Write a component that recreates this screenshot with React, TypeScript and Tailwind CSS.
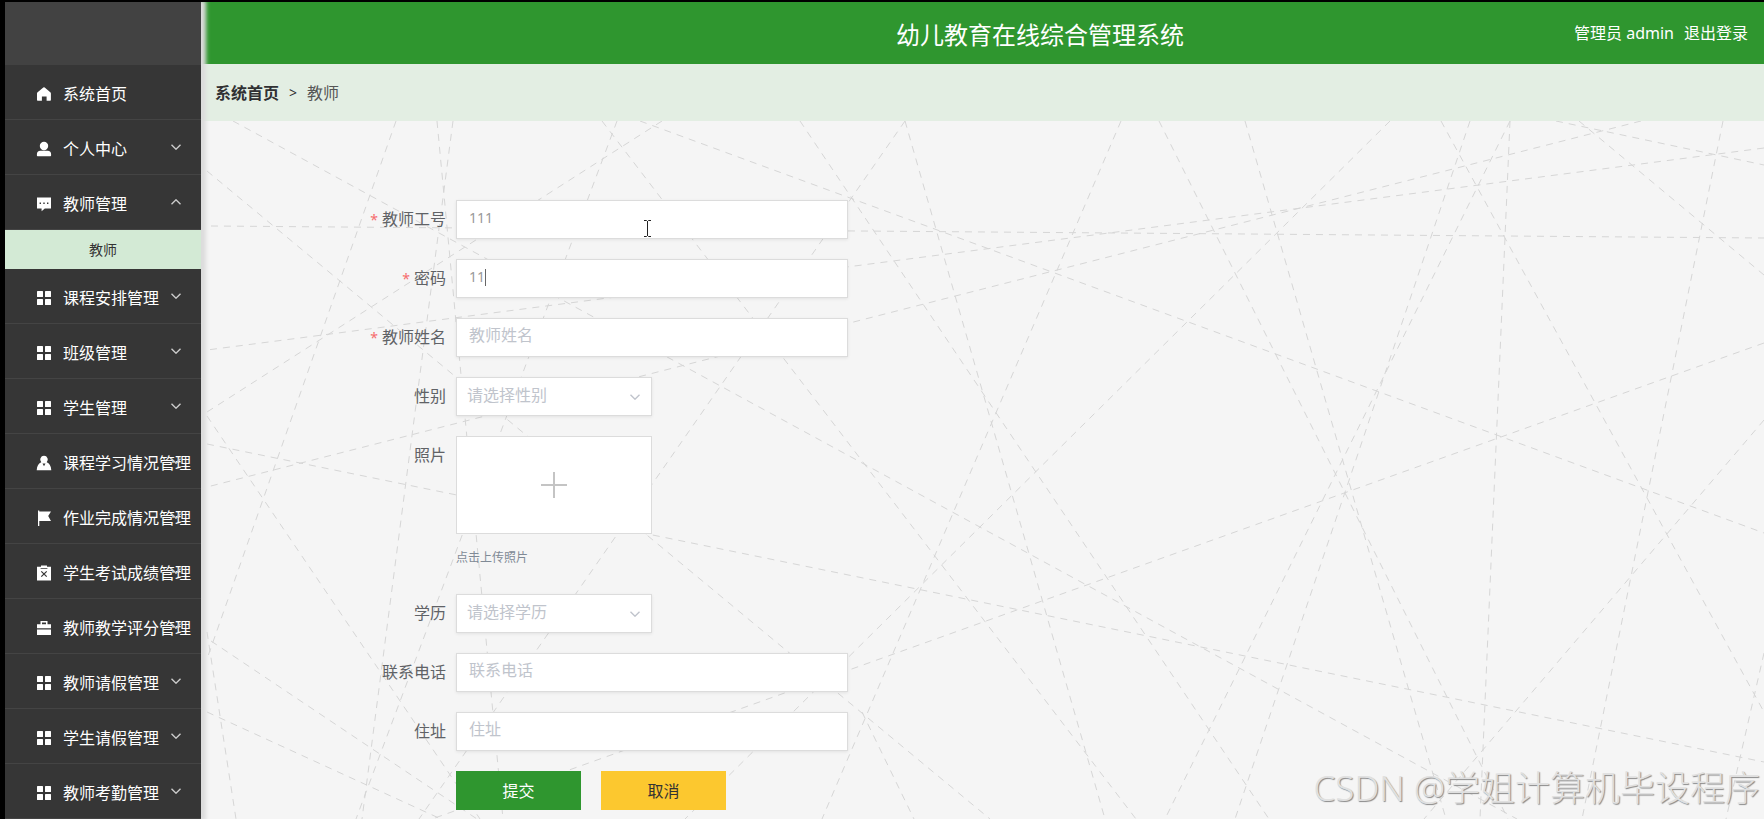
import React, { useState } from 'react';

type IconName = 'home' | 'user' | 'comment' | 'grid' | 'custom' | 'flag' | 'release' | 'case';

interface MenuItem {
  id: number;
  icon: IconName;
  label: string;
  children?: string[];
}

const menuItems: MenuItem[] = [
  { id: 1, icon: 'home', label: '系统首页' },
  { id: 2, icon: 'user', label: '个人中心', children: ['修改密码', '个人信息'] },
  { id: 3, icon: 'comment', label: '教师管理', children: ['教师'] },
  { id: 4, icon: 'grid', label: '课程安排管理', children: ['课程安排'] },
  { id: 5, icon: 'grid', label: '班级管理', children: ['班级'] },
  { id: 6, icon: 'grid', label: '学生管理', children: ['学生'] },
  { id: 7, icon: 'custom', label: '课程学习情况管理', children: ['课程学习情况'] },
  { id: 8, icon: 'flag', label: '作业完成情况管理', children: ['作业完成情况'] },
  { id: 9, icon: 'release', label: '学生考试成绩管理', children: ['学生考试成绩'] },
  { id: 10, icon: 'case', label: '教师教学评分管理', children: ['教师教学评分'] },
  { id: 11, icon: 'grid', label: '教师请假管理', children: ['教师请假'] },
  { id: 12, icon: 'grid', label: '学生请假管理', children: ['学生请假'] },
  { id: 13, icon: 'grid', label: '教师考勤管理', children: ['教师考勤'] }
];

// x1, y1, x2, y2 of every dashed line behind the form
const backdropLines = [
  [905, 121, 1105, 819],
  [1121, 121, 822, 819],
  [1159, 121, 1508, 819],
  [1245, 121, 1446, 819],
  [1390, 121, 685, 819],
  [1441, 121, 1764, 712],
  [1470, 121, 1235, 819],
  [1510, 121, 1165, 819],
  [1510, 121, 1480, 819],
  [1723, 121, 1582, 819],
  [1579, 121, 1764, 275],
  [1556, 121, 1764, 165],
  [1641, 121, 207, 487],
  [1764, 148, 207, 350],
  [211, 226, 1764, 238],
  [640, 121, 1764, 533],
  [800, 121, 1269, 819],
  [602, 121, 1136, 819],
  [233, 121, 1517, 819],
  [207, 171, 990, 819],
  [207, 444, 1764, 762],
  [1764, 343, 432, 819],
  [1764, 420, 1424, 819],
  [1764, 653, 1726, 819],
  [862, 712, 914, 819],
  [396, 121, 207, 659],
  [437, 121, 503, 819],
  [453, 121, 362, 819],
  [617, 121, 356, 819],
  [662, 121, 207, 412],
  [905, 121, 419, 819],
  [207, 416, 480, 819],
  [211, 641, 477, 819],
  [207, 712, 441, 819],
  [207, 632, 236, 819]
];

const MenuIcon: React.FC<{ name: IconName }> = ({ name }) => (
  <svg viewBox="0 0 16 16" className="h-4 w-4 shrink-0 fill-white" aria-hidden="true">
    {name === 'home' && (
      <path d="M7.3 1.4a1.2 1.2 0 0 1 1.4 0l5.6 4.8c.4.3.6.8.6 1.2v6.4c0 .6-.4 1-1 1h-3.3v-4.300H5.900v4.300H2c-.6 0-1-.4-1-1V7.400c0-.5.2-.9.6-1.200z" />
    )}
    {name === 'user' && (
      <path d="M8 .8a4.200 4.200 0 1 1 0 8.400A4.200 4.200 0 0 1 8 .8zM4.400 9.800h7.200a3.500 3.500 0 0 1 3.500 3.500v1.200c0 .4-.3.700-.7.700H1.600a.7.700 0 0 1-.7-.7v-1.200a3.500 3.500 0 0 1 3.500-3.500z" />
    )}
    {name === 'comment' && (
      <path
        fillRule="evenodd"
        d="M1 1.500h14v11H8.800L5.600 15.200v-2.700H1zM3.600 6.500v1.400H5V6.500zm3.700 0v1.400h1.400V6.500zm3.700 0v1.400h1.400V6.500z"
      />
    )}
    {name === 'grid' && (
      <>
        <rect x="1" y="1" width="6" height="6" rx="0.500" />
        <rect x="9" y="1" width="6" height="6" rx="0.500" />
        <rect x="1" y="9" width="6" height="6" rx="0.500" />
        <rect x="9" y="9" width="6" height="6" rx="0.500" />
      </>
    )}
    {name === 'custom' && (
      <path d="M8 .8a3.800 3.800 0 0 1 2.700 6.500c2.600.9 4.400 3.700 4.600 7.900H.7c.2-4.200 2-7 4.600-7.900A3.800 3.800 0 0 1 8 .8zM6.500 8.600 8 11.200l1.500-2.600z" />
    )}
    {name === 'flag' && <path d="M2 .5h1.300v1H15l-2.800 4.600L15 11H3.300v5H2z" />}
    {name === 'release' && (
      <>
        <path fillRule="evenodd" d="M5 .5h6v1.300h4v13.700H1V1.800h4zM4.600 3h6.800v.8H4.600z" />
        <path d="M5.300 6.300l5.400 5.400M10.700 6.300l-5.400 5.400" className="stroke-[#363636]" strokeWidth="1.200" />
      </>
    )}
    {name === 'case' && (
      <path fillRule="evenodd" d="M4.500 1h7v3.300H15v4H1v-4h3.500zM6 2.400v1.900h4V2.400zM1 9.500h14V15H1z" />
    )}
  </svg>
);

const Chevron: React.FC<{ open?: boolean; className: string }> = ({ open, className }) => (
  <svg viewBox="0 0 10 6" className={className} fill="none" strokeWidth="1.400" aria-hidden="true">
    <path d={open ? 'M.5 5.200 5 .8l4.500 4.400' : 'M.5.8 5 5.200 9.500.8'} />
  </svg>
);

interface FieldProps {
  id: string;
  label: string;
  required?: boolean;
  children: React.ReactNode;
}

const Field: React.FC<FieldProps> = ({ id, label, required, children }) => (
  <div className="flex items-start">
    <label htmlFor={id} className="w-[245px] shrink-0 pr-[10px] text-right leading-[39px] text-[#606266]">
      {required && <span className="mr-1 text-sm text-[#f56c6c]">*</span>}
      {label}
    </label>
    {children}
  </div>
);

const boxClass = 'block h-[39px] border border-[#dcdcdc] bg-white shadow-[0_1px_3px_rgba(0,0,0,0.08)] outline-none';

const App: React.FC = () => {
  const [openId, setOpenId] = useState(3);
  const [form, setForm] = useState({
    code: '111',
    password: '11',
    name: '',
    gender: '',
    degree: '',
    phone: '',
    address: ''
  });

  const update = (e: React.ChangeEvent<HTMLInputElement | HTMLSelectElement>) => {
    setForm({ ...form, [e.target.id]: e.target.value });
  };

  const inputClass = `${boxClass} w-[392px] px-3 pb-1 text-sm text-[#999] placeholder:text-base placeholder:text-[#c0c4cc]`;
  const selectClass = `${boxClass} w-full appearance-none pl-[10px] pr-8 pb-1 text-[#c0c4cc]`;

  return (
    <div className="relative flex h-screen overflow-hidden border-l-5 border-t-2 border-black bg-[#f5f5f5] font-['Noto_Sans','Noto_Sans_CJK_SC',sans-serif] text-base">
      {/* Sidebar */}
      <aside className="relative z-10 w-[196px] shrink-0 bg-[#363636] shadow-[3px_0_4px_2px_#dcdcdc]">
        <div className="h-[63px] bg-[#424242]" />
        <nav>
          {menuItems.map((item) => (
            <div key={item.id}>
              <button
                type="button"
                onClick={() => setOpenId(openId === item.id ? 0 : item.id)}
                className="relative flex h-[55px] w-full items-center gap-[11px] whitespace-nowrap border-b border-[#444] pl-[31px] pt-[3px] text-white"
              >
                <MenuIcon name={item.icon} />
                <span>{item.label}</span>
                {item.children && (
                  <Chevron
                    open={openId === item.id}
                    className="absolute right-5 top-6 h-[6px] w-[10px] stroke-[#ccc]"
                  />
                )}
              </button>
              {openId === item.id &&
                item.children?.map((child) => (
                  <a
                    key={child}
                    href="#"
                    className="block h-[39px] bg-[#d3ead5] text-center text-sm leading-[39px] text-[#333]"
                  >
                    {child}
                  </a>
                ))}
            </div>
          ))}
        </nav>
      </aside>

      <div className="flex min-w-0 flex-1 flex-col">
        {/* Header */}
        <header className="flex h-[62px] shrink-0 items-center bg-[#2f962f] pl-[305px] pr-4 text-white">
          <h1 className="flex-1 pt-1 text-center text-2xl">幼儿教育在线综合管理系统</h1>
          <span>管理员 admin</span>
          <button type="button" className="ml-[10px]">
            退出登录
          </button>
        </header>

        {/* Breadcrumb */}
        <div className="flex h-[57px] shrink-0 items-center bg-[#e3eee3] pl-[14px] pt-px">
          <a href="#" className="font-bold text-[#303133]">
            系统首页
          </a>
          <span className="mx-[10px] text-sm text-[#303133]">&gt;</span>
          <span className="text-[#555]">教师</span>
        </div>

        <main className="relative flex-1">
          <svg
            viewBox="201 121 1563 698"
            preserveAspectRatio="xMidYMid slice"
            className="absolute inset-0 h-full w-full stroke-[#d6d6d6]"
            strokeDasharray="7 6"
            aria-hidden="true"
          >
            {backdropLines.map(([x1, y1, x2, y2], i) => (
              <line key={i} x1={x1} y1={y1} x2={x2} y2={y2} />
            ))}
          </svg>

          {/* Form */}
          <form className="relative flex flex-col gap-5 pl-[10px] pt-[79px]" onSubmit={(e) => e.preventDefault()}>
            <Field id="code" label="教师工号" required>
              <div className="relative">
                <input id="code" value={form.code} onChange={update} className={inputClass} />
                {/* pointer */}
                <svg
                  viewBox="0 0 9 17"
                  className="pointer-events-none absolute left-[187px] top-5 h-[17px] w-[9px] stroke-[#222]"
                  fill="none"
                  aria-hidden="true"
                >
                  <path d="M1 .5h2.500l1 1 1-1H8M4.500 1v15M1 16.500h2.500l1-1 1 1H8" />
                </svg>
              </div>
            </Field>
            <Field id="password" label="密码" required>
              <div className="relative">
                <input id="password" value={form.password} onChange={update} className={inputClass} />
                <span className="absolute left-[29px] top-[10px] h-[17px] w-px bg-[#666]" />
              </div>
            </Field>
            <Field id="name" label="教师姓名" required>
              <input id="name" value={form.name} onChange={update} placeholder="教师姓名" className={inputClass} />
            </Field>
            <Field id="gender" label="性别">
              <div className="relative w-[196px]">
                <select id="gender" value={form.gender} onChange={update} className={selectClass}>
                  <option value="">请选择性别</option>
                  <option value="男">男</option>
                  <option value="女">女</option>
                </select>
                <Chevron className="pointer-events-none absolute right-3 top-[17px] h-[6px] w-[10px] stroke-[#c0c4cc]" />
              </div>
            </Field>
            <Field id="photo" label="照片">
              <div className="h-[138px]">
                <button
                  id="photo"
                  type="button"
                  aria-label="上传照片"
                  className="flex h-[98px] w-[196px] items-center justify-center border border-[#dcdcdc] bg-white"
                >
                  <svg viewBox="0 0 26 26" className="h-[26px] w-[26px] stroke-[#c4c4c4]" strokeWidth="2" aria-hidden="true">
                    <path d="M13 0v26M0 13h26" />
                  </svg>
                </button>
                <p className="mt-4 text-xs text-[#808a96]">点击上传照片</p>
              </div>
            </Field>
            <Field id="degree" label="学历">
              <div className="relative w-[196px]">
                <select id="degree" value={form.degree} onChange={update} className={selectClass}>
                  <option value="">请选择学历</option>
                  <option value="本科">本科</option>
                  <option value="硕士">硕士</option>
                </select>
                <Chevron className="pointer-events-none absolute right-3 top-[17px] h-[6px] w-[10px] stroke-[#c0c4cc]" />
              </div>
            </Field>
            <Field id="phone" label="联系电话">
              <input id="phone" value={form.phone} onChange={update} placeholder="联系电话" className={inputClass} />
            </Field>
            <Field id="address" label="住址">
              <input id="address" value={form.address} onChange={update} placeholder="住址" className={inputClass} />
            </Field>
            <div className="flex gap-5 pl-[245px]">
              <button type="submit" className="h-[39px] w-[125px] bg-[#2f962f] text-white">
                提交
              </button>
              <button type="button" className="h-[39px] w-[125px] bg-[#fcc82f] text-[#333]">
                取消
              </button>
            </div>
          </form>
        </main>
      </div>

      {/* Watermark */}
      <div className="pointer-events-none absolute bottom-[6px] right-1 text-[35px] font-light leading-[50px] text-[#e0e0e0] [text-shadow:1px_1px_1px_#888]">
        CSDN @学姐计算机毕设程序
      </div>
    </div>
  );
};

export default App;
